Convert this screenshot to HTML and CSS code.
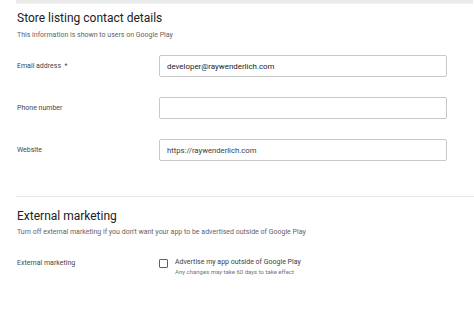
FILE: index.html
```html
<!DOCTYPE html>
<html lang="en">
<head>
<meta charset="utf-8">
<title>Store listing contact details</title>
<link rel="stylesheet" href="styles.css">
</head>
<body>
<div class="prev-card"></div>
<section class="section">
  <h2 class="title">Store listing contact details</h2>
  <p class="subtitle">This information is shown to users on Google Play</p>
  <div class="rows">
    <div class="row">
      <div class="label">Email address &nbsp;*</div>
      <div class="field"><span class="value value-email">developer@raywenderlich.com</span></div>
    </div>
    <div class="row">
      <div class="label">Phone number</div>
      <div class="field"></div>
    </div>
    <div class="row">
      <div class="label">Website</div>
      <div class="field"><span class="value">https://raywenderlich.com</span></div>
    </div>
  </div>
</section>
<hr class="divider">
<section class="section">
  <h2 class="title title-2">External marketing</h2>
  <p class="subtitle subtitle-2">Turn off external marketing if you don't want your app to be advertised outside of Google Play</p>
  <div class="row row-check">
    <div class="label">External marketing</div>
    <div class="check">
      <span class="box"></span>
      <div class="check-text">
        <div class="check-label">Advertise my app outside of Google Play</div>
        <div class="check-help">Any changes may take 60 days to take effect</div>
      </div>
    </div>
  </div>
</section>
</body>
</html>
```
FILE: styles.css
```css
html, body {
  margin: 0;
  padding: 0;
  background: #ffffff;
  font-family: Roboto, "Liberation Sans", Arial, sans-serif;
  color: #202124;
}

.prev-card {
  height: 3px;
  margin: 0 1px 0 16px;
  background: #ebebeb;
  box-shadow: 0 1px 1px rgba(0, 0, 0, 0.06);
}

.section {
  padding-left: 17px;
}

.title {
  margin: 8px 0 0;
  font-size: 12px;
  line-height: 14px;
  font-weight: 400;
  color: #202124;
}

.title-2 {
  margin-top: 12px;
}

.subtitle {
  margin: 6px 0 0;
  font-size: 7px;
  line-height: 9px;
  color: #5f6368;
}

.subtitle-2 {
  margin-top: 5px;
}

.rows {
  display: flex;
  flex-direction: column;
  gap: 20px;
  margin-top: 15px;
}

.row {
  display: flex;
  align-items: center;
}

.label {
  width: 142px;
  flex: none;
  font-size: 7px;
  line-height: 9px;
  color: #44474a;
}

.field {
  box-sizing: border-box;
  width: 288px;
  height: 22px;
  border: 1px solid #c8c8c8;
  border-radius: 2px;
  display: flex;
  align-items: center;
  padding-left: 7px;
}

.value {
  font-size: 7.7px;
  color: #3c4043;
}

.value-email {
  font-size: 7.9px;
  color: #202124;
}

.divider {
  margin: 35px 0 0 16px;
  border: 0;
  border-top: 1px solid #e6e6e6;
  height: 0;
}

.row-check {
  margin-top: 21px;
  align-items: flex-start;
}

.row-check .label {
  margin-top: 1px;
}

.check {
  display: flex;
  align-items: flex-start;
  gap: 7px;
}

.box {
  box-sizing: border-box;
  width: 9px;
  height: 9px;
  margin-top: 1px;
  border: 1.3px solid #5f6368;
  border-radius: 1px;
  flex: none;
}

.check-label {
  font-size: 7px;
  line-height: 9px;
  color: #3c4043;
}

.check-help {
  margin-top: 1px;
  font-size: 6px;
  line-height: 8px;
  color: #70757a;
}
```
